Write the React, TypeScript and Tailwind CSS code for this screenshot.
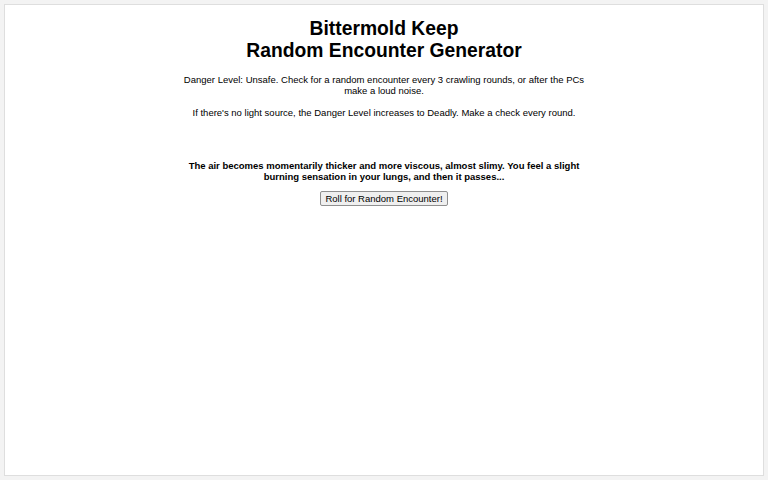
import { useState } from "react";

const encounters = [
  "The air becomes momentarily thicker and more viscous, almost slimy. You feel a slight burning sensation in your lungs, and then it passes...",
];

export default function App() {
  const [result, setResult] = useState(encounters[0]);

  return (
    <div className="min-h-screen bg-[#f3f3f3] p-[4px] font-['Liberation_Sans',Arial,sans-serif] text-black">
      <div className="h-[472px] border border-[#dedede] bg-white px-4 pt-[13px]">
        <h1 className="text-center text-[19.3px] font-bold leading-[22px]">
          Bittermold Keep
          <br />
          Random Encounter Generator
        </h1>

        <div className="mx-auto mt-[12px] max-w-[410px] text-center text-[9.5px] leading-[11px]">
          <p>
            Danger Level: Unsafe. Check for a random encounter every 3 crawling rounds, or after the PCs make a loud
            noise.
          </p>
          <p className="mt-[11px]">
            If there's no light source, the Danger Level increases to Deadly. Make a check every round.
          </p>

          <p className="mt-[42px] font-bold">{result}</p>

          <button
            onClick={() => setResult(encounters[Math.floor(Math.random() * encounters.length)])}
            className="mt-[9px] rounded-[2px] border border-[#8f8f8f] bg-[#efefef] px-[4px] py-[1px] text-[9.5px] leading-[11px]"
          >
            Roll for Random Encounter!
          </button>
        </div>
      </div>
    </div>
  );
}
